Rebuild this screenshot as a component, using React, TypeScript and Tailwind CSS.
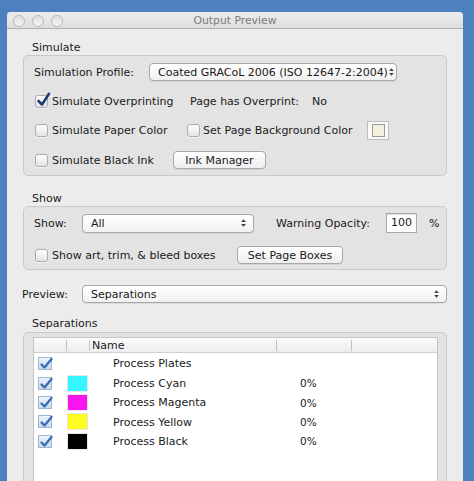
import React from "react";

const font = { fontFamily: '"DejaVu Sans", "Liberation Sans", sans-serif' };

function Check({ checked = false }: { checked?: boolean }) {
  return (
    <div className="relative w-[13px] h-[13px] rounded-[3px] border border-[#acacac] bg-gradient-to-b from-[#ffffff] to-[#e4e4e4] shrink-0 shadow-[0_1px_0_rgba(255,255,255,0.6)]">
      {checked && (
        <svg className="absolute left-[0px] top-[-4px]" width="16" height="16" viewBox="0 0 16 16">
          <path d="M2.5 9 L6 12.5 L13 1.8" fill="none" stroke="#1d3e72" strokeWidth="2.6" strokeLinecap="round" strokeLinejoin="round" />
        </svg>
      )}
    </div>
  );
}

function TableCheck() {
  return (
    <div className="relative w-[14px] h-[13px] border border-[#9fb6d3] bg-gradient-to-b from-[#eef4fc] to-[#c9daef] shrink-0">
      <svg className="absolute left-[0px] top-[-2px]" width="15" height="15" viewBox="0 0 15 15">
        <path d="M2.5 8.5 L5.5 11.5 L12.5 3" fill="none" stroke="#3a6cb0" strokeWidth="2.3" strokeLinecap="round" strokeLinejoin="round" />
      </svg>
    </div>
  );
}

function Arrows() {
  return (
    <svg width="7" height="10" viewBox="0 0 7 10" className="shrink-0">
      <path d="M1.2 4 L3.5 1.2 L5.8 4 Z" fill="#3a3a3a" />
      <path d="M1.2 6 L3.5 8.8 L5.8 6 Z" fill="#3a3a3a" />
    </svg>
  );
}

function Select({ children, className }: { children: React.ReactNode; className: string }) {
  return (
    <div className={"flex items-center justify-between rounded-[4px] border border-[#a8a8a8] bg-gradient-to-b from-[#ffffff] to-[#f1f1f1] shadow-[0_1px_0_rgba(0,0,0,0.07)] pl-[8px] pr-[6px] shrink-0 " + className}>
      <span className="leading-none whitespace-nowrap pt-[1px]">{children}</span>
      <Arrows />
    </div>
  );
}

function Button({ children, className }: { children: React.ReactNode; className: string }) {
  return (
    <div className={"flex items-center justify-center rounded-[4px] border border-[#a8a8a8] bg-gradient-to-b from-[#ffffff] to-[#eeeeee] shadow-[0_1px_0_rgba(0,0,0,0.07)] leading-none whitespace-nowrap shrink-0 pt-[1px] " + className}>
      {children}
    </div>
  );
}

function T({ children, className = "" }: { children: React.ReactNode; className?: string }) {
  return <span className={"pt-[2px] shrink-0 " + className}>{children}</span>;
}

const rows = [
  { name: "Process Plates", color: null as string | null, pct: "" },
  { name: "Process Cyan", color: "#33f6ff", pct: "0%" },
  { name: "Process Magenta", color: "#f715ef", pct: "0%" },
  { name: "Process Yellow", color: "#fdfb20", pct: "0%" },
  { name: "Process Black", color: "#000000", pct: "0%" },
];

export default function App() {
  return (
    <div className="w-[474px] h-[481px] bg-[#4e7fbf] overflow-hidden pt-[12px] pl-[7px] text-[11px] text-[#1a1a1a] whitespace-nowrap" style={font}>
      <div className="w-[456px] h-[469px] bg-[#ececec] rounded-t-[4px] overflow-hidden">
        {/* title bar */}
        <div className="relative h-[17px] bg-gradient-to-b from-[#ececec] to-[#dedede] border-b border-[#b0b0b0] flex items-center justify-center">
          <div className="absolute left-[6px] top-[3px] flex gap-[7px]">
            <div className="w-[12px] h-[12px] rounded-full border border-[#b9b9b9] bg-gradient-to-b from-[#dedede] to-[#f4f4f4]" />
            <div className="w-[12px] h-[12px] rounded-full border border-[#b9b9b9] bg-gradient-to-b from-[#dedede] to-[#f4f4f4]" />
            <div className="w-[12px] h-[12px] rounded-full border border-[#b9b9b9] bg-gradient-to-b from-[#dedede] to-[#f4f4f4]" />
          </div>
          <span className="text-[10.8px] text-[#7c7c7c] leading-none pt-[2px]">Output Preview</span>
        </div>

        <div className="px-[16px]">
          {/* Simulate */}
          <div className="pl-[9px] mt-[12px] leading-[14px] h-[13px]">Simulate</div>
          <div className="mt-[1px] h-[121px] rounded-[5px] border border-[#c9c9c9] bg-[#e3e3e3] pl-[10px] flex flex-col">
            <div className="flex items-center h-[18px] mt-[7px]">
              <T className="w-[115px]">Simulation Profile:</T>
              <Select className="w-[248px] h-[18px]">Coated GRACoL 2006 (ISO 12647-2:2004)</Select>
            </div>
            <div className="flex items-center h-[16px] mt-[12px]">
              <div className="pl-[1px] pr-[4px]"><Check checked /></div>
              <T className="w-[138px]">Simulate Overprinting</T>
              <T className="w-[122px]">Page has Overprint:</T>
              <T>No</T>
            </div>
            <div className="flex items-center h-[19px] mt-[12px]">
              <div className="pl-[1px] pr-[4px]"><Check /></div>
              <T className="w-[135px]">Simulate Paper Color</T>
              <div className="pr-[3px]"><Check /></div>
              <T className="w-[164px]">Set Page Background Color</T>
              <div className="w-[22px] h-[19px] border border-[#bdbdbd] bg-[#fafafa] flex items-center justify-center shrink-0">
                <div className="w-[13px] h-[13px] border border-[#9a9a9a] bg-[#f2f0de]" />
              </div>
            </div>
            <div className="flex items-center h-[18px] mt-[11px]">
              <div className="pl-[1px] pr-[4px]"><Check /></div>
              <T className="w-[121px]">Simulate Black Ink</T>
              <Button className="w-[93px] h-[18px]">Ink Manager</Button>
            </div>
          </div>

          {/* Show */}
          <div className="pl-[9px] mt-[16px] leading-[14px] h-[14px]">Show</div>
          <div className="h-[64px] rounded-[5px] border border-[#c9c9c9] bg-[#e3e3e3] pl-[10px] flex flex-col">
            <div className="flex items-center h-[20px] mt-[6px]">
              <T className="w-[48px]">Show:</T>
              <Select className="w-[172px] h-[19px]">All</Select>
              <T className="ml-[22px] w-[110px]">Warning Opacity:</T>
              <div className="w-[31px] h-[20px] pt-[1px] border border-[#a9a9a9] bg-white flex items-center justify-center shadow-[inset_0_1px_1px_rgba(0,0,0,0.15)] shrink-0">100</div>
              <T className="ml-[12px]">%</T>
            </div>
            <div className="flex items-center h-[18px] mt-[13px]">
              <div className="pl-[1px] pr-[4px]"><Check /></div>
              <T className="w-[185px]">Show art, trim, &amp; bleed boxes</T>
              <Button className="w-[106px] h-[18px]">Set Page Boxes</Button>
            </div>
          </div>

          {/* Preview */}
          <div className="flex items-center h-[18px] mt-[15px]">
            <T className="w-[60px] -ml-[1px]">Preview:</T>
            <Select className="w-[365px] h-[18px]">Separations</Select>
          </div>

          {/* Separations */}
          <div className="pl-[9px] mt-[14px] leading-[14px] h-[14px]">Separations</div>
          <div className="mt-[1px] h-[200px] rounded-t-[5px] border border-[#c9c9c9] bg-[#e3e3e3] pl-[9px] pr-[8px] pt-[4px]">
            <div className="h-[200px] bg-white border border-[#c4c4c4]">
              <div className="flex h-[15px] items-center border-b border-[#d0d0d0] bg-gradient-to-b from-[#fbfbfb] to-[#ededed]">
                <div className="w-[33px] h-[11px] border-r border-[#c2c2c2]" />
                <div className="w-[23px] h-[11px] border-r border-[#c2c2c2]" />
                <div className="w-[186px] pl-[2px] pt-[1px] leading-none">Name</div>
                <div className="w-[76px] h-[11px] border-l border-r border-[#c2c2c2]" />
              </div>
              <div className="flex flex-col pt-[1px]">
                {rows.map((r) => (
                  <div key={r.name} className="flex items-center h-[19.4px]">
                    <div className="w-[33px] pl-[4px]"><TableCheck /></div>
                    <div className="w-[46px]">
                      {r.color && <div className="w-[21px] h-[17px] border border-[#e6e6e6]" style={{ backgroundColor: r.color }} />}
                    </div>
                    <T className="w-[187px]">{r.name}</T>
                    <T className="text-[10.5px]">{r.pct}</T>
                  </div>
                ))}
              </div>
            </div>
          </div>
        </div>
      </div>
    </div>
  );
}
